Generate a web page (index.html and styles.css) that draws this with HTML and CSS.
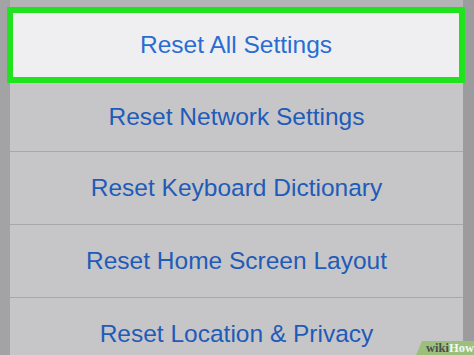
FILE: index.html
```html
<!DOCTYPE html>
<html lang="en">
<head>
    <meta charset="UTF-8">
    <meta name="viewport" content="width=device-width, initial-scale=1.0">
    <title>Reset</title>
    <link rel="stylesheet" href="styles.css">
</head>
<body>
    <div class="panel">
        <div class="sliver"></div>
        <div class="row selected">Reset All Settings</div>
        <div class="row first">Reset Network Settings</div>
        <div class="row">Reset Keyboard Dictionary</div>
        <div class="row">Reset Home Screen Layout</div>
        <div class="row">Reset Location &amp; Privacy</div>
    </div>
    <div class="badge"><span class="wiki">wiki</span><span class="how">How</span></div>
</body>
</html>
```

FILE: styles.css
```css
body {
    margin: 0;
    height: 355px;
    overflow: hidden;
    background-color: #9c9c9f;
    font-family: "Liberation Sans", Arial, sans-serif;
    position: relative;
}
.panel {
    margin-left: 10px;
    width: 453px;
    height: 355px;
    background-color: #c6c6c8;
    box-shadow: -10px 0 0 #a3a3a5;
}
.sliver {
    height: 7px;
    background-color: #b4b4b6;
}
.row {
    display: flex;
    align-items: center;
    justify-content: center;
    box-sizing: border-box;
    height: 73px;
    border-top: 1px solid #a8a8aa;
    font-size: 24.5px;
    color: #1f5bb8;
}
.row.first {
    height: 68px;
    border-top: none;
}
.row.selected {
    height: 76px;
    margin: 0 -2px 0 -3px;
    border: 6px solid #1fe31c;
    background-color: #efeff1;
    color: #2a6cd2;
}
.badge {
    position: absolute;
    right: 0;
    bottom: 0;
    width: 58px;
    height: 14px;
    background-color: #9bc07c;
    clip-path: polygon(6px 0, 100% 0, 100% 100%, 0 100%);
    font-family: "Liberation Serif", serif;
    font-weight: bold;
    font-size: 12.5px;
    line-height: 15px;
    padding-left: 10px;
    box-sizing: border-box;
    white-space: nowrap;
}
.wiki { color: #4d4d4d; }
.how { color: #f4f8f0; }
```
